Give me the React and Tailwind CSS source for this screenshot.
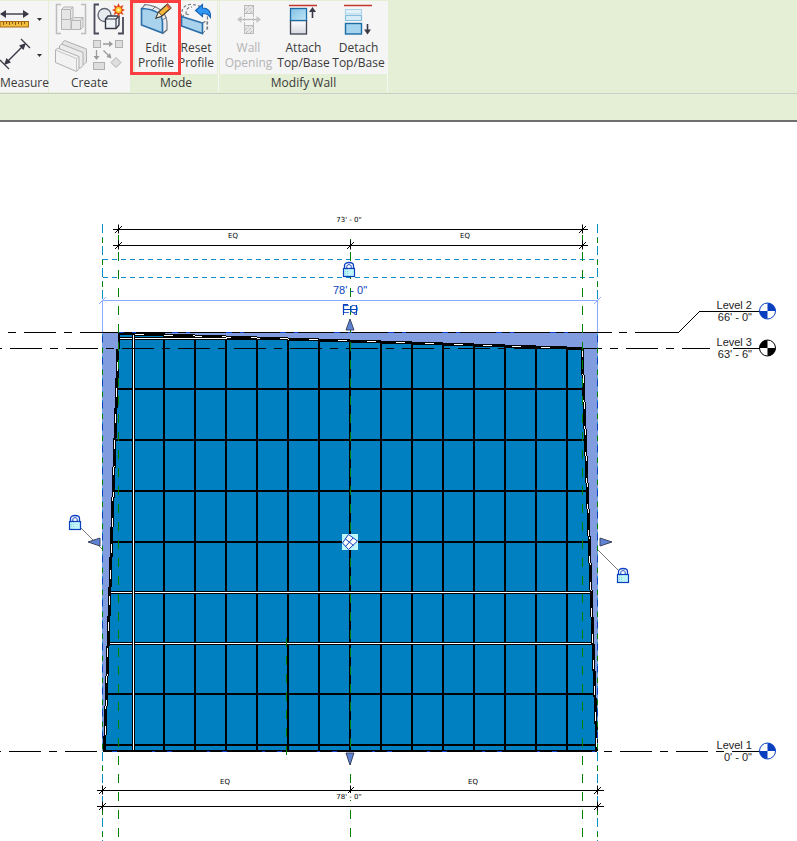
import React from "react";

const INK = "#3a3a46";

function Tool({ label, icon, className = "", disabled = false, children }) {
  return (
    <button
      type="button"
      disabled={disabled}
      className={
        "relative flex h-[73px] shrink-0 flex-col items-center whitespace-nowrap text-center leading-[15px] " +
        (disabled ? "text-[#b4b4b4] " : "text-[#3a3a3a] ") +
        className
      }
    >
      {icon}
      {label.map((line) => (
        <span key={line}>{line}</span>
      ))}
      {children}
    </button>
  );
}

function Panel({ title, className = "", titleClass = "", bodyClass = "", children }) {
  return (
    <section className={"flex shrink-0 flex-col bg-[#f5f5f5] " + className}>
      <div className={"flex h-[73px] " + bodyClass}>{children}</div>
      <h2 className={"h-[18px] text-center leading-[18px] whitespace-nowrap " + titleClass}>{title}</h2>
    </section>
  );
}

function RulerIcon() {
  return (
    <svg viewBox="0 1 48 36" className="h-9 w-12">
      <path d="M1 14H28" stroke={INK} strokeWidth="1.4" />
      <path d="M0 14L6 10V18ZM29 14L23 10V18Z" fill={INK} />
      <rect x="0" y="21.500" width="28.500" height="5.500" fill="#f0bd3c" stroke="#a46b16" />
      <path d="M3.500 22v3M6.500 22v2M9.500 22v3M12.500 22v2M15.500 22v3M18.500 22v2M21.500 22v3M24.500 22v2" stroke="#8a5a14" />
      <path d="M37 18h5l-2.500 3z" fill="#333" />
    </svg>
  );
}

function AlignedIcon() {
  return (
    <svg viewBox="0 37 48 36" className="h-9 w-12">
      <path d="M6 63L24 45" stroke={INK} strokeWidth="1.4" />
      <path d="M4 65L6.500 58L11 62.500ZM26 43L19 45.500L23.500 50Z" fill={INK} />
      <path d="M0 60L9 69M21 39L30 48" stroke={INK} strokeWidth="1.3" />
      <path d="M37 54h5l-2.500 3z" fill="#333" />
    </svg>
  );
}

function AssemblyIcon() {
  return (
    <svg viewBox="52 1 38 36" className="h-9 w-[38px]" fill="none" stroke="#b5b5b5">
      <path d="M61 4.500H56.500V33.500H61M81 4.500H85.500V33.500H81" strokeWidth="1.500" stroke="#bdbdbd" />
      <g fill="#e6e6e6">
        <path d="M61.500 9.500L64 7H73V17L70.500 19.500H61.500Z" />
        <path d="M61.500 19.500H71V29.500H61.500Z" />
        <path d="M71.500 20.500L74 17.500H83V27L80.500 29.500H71.500Z" />
      </g>
      <path d="M61.500 9.500H70.500V19.500M70.500 9.500L73 7M71.500 20.500H80.500V29.500M80.500 20.500L83 17.500" />
    </svg>
  );
}

function CreateSimilarIcon() {
  return (
    <svg viewBox="90 1 38 36" className="h-9 w-[38px]" fill="none">
      <path d="M99 4.500H94.500V33.500H99M118 33.500H123V17" stroke="#4a4a58" strokeWidth="1.800" />
      <circle cx="104.500" cy="15" r="6.500" fill="#e7ebf0" stroke="#626573" strokeWidth="1.300" />
      <path d="M105.500 19L108 16H119V25L116 28.500H105.500Z" fill="#eef1f6" stroke="#343844" strokeWidth="1.400" />
      <path d="M105.500 19H116V28.500M116 19L119 16" stroke="#343844" strokeWidth="1.200" />
      <path d="M118.500 3L120 6.500L123.500 5L122 8.500L125 10L122 11.500L123.500 15L120 13.500L118.500 17L117 13.500L113.500 15L115 11.500L112 10L115 8.500L113.500 5L117 6.500Z" fill="#e2471c" />
      <circle cx="118.500" cy="10" r="3" fill="#ffc928" />
      <circle cx="118.500" cy="10" r="1.300" fill="#fff7b8" />
    </svg>
  );
}

function PartsIcon() {
  return (
    <svg viewBox="52 37 38 36" className="h-9 w-[38px]" fill="#e4e4e4" stroke="#b0b0b0">
      <path d="M62.500 41.500L64.500 39.500L86.500 48V61L84 63.500L62.500 55Z" />
      <path d="M59.500 45L61.500 43L83 51.500V64.500L80.500 67L59.500 58.500Z" fill="#ececec" />
      <path d="M55.500 49L57.500 47L79 55.500V68L76.500 70.500L55.500 61.500Z" fill="#f2f2f2" />
      <path d="M55.500 49L76.500 57.500V70.500M76.500 57.500L79 55.500" fill="none" stroke="#c4c4c4" />
    </svg>
  );
}

function GroupIcon() {
  return (
    <svg viewBox="90 37 38 36" className="h-9 w-[38px]" fill="#dedede" stroke="#b0b0b0">
      <rect x="93.500" y="39.500" width="7" height="7" />
      <rect x="115.500" y="39.500" width="7" height="7" />
      <rect x="93.500" y="61.500" width="11" height="7" />
      <path d="M116 56.500L121 61.500L116 66.500L111 61.500Z" />
      <path d="M103 43H110M96.500 49V56M103.500 49.500L109 55" strokeWidth="1.300" stroke="#9a9a9a" />
      <path d="M109 40L113 43L109 46ZM93.500 55H99.500L96.500 59ZM111.500 57.500L106.500 56L110 52Z" fill="#9a9a9a" stroke="none" />
    </svg>
  );
}

function EditProfileIcon() {
  return (
    <svg viewBox="138 1 36 39" className="h-[39px] w-9" fill="none">
      <path d="M141.500 9L145 4.500C157 6 166 11 167 22V30L163 33.500" fill="#e9edf2" stroke="#73777f" strokeWidth="1.200" />
      <path d="M141.500 8.500C154 9 162 13 162.500 22V33L141.500 25Z" fill="#a9d2ec" stroke="#2a6da8" strokeWidth="1.600" />
      <path d="M162.500 33L166.500 30M162 20L167 17.500M152 10L155.500 6.500" stroke="#73777f" />
      <path d="M156 18L158.500 12L167.500 4L171 8L162 16Z" fill="#f5b73a" stroke="#3c3425" strokeWidth="1.100" />
      <path d="M156 18L158.500 12L162 16Z" fill="#fff0cf" stroke="#333" strokeWidth=".8" />
      <path d="M166 5.500L167.500 4L171 8L169.500 9.500Z" fill="#e45a42" />
    </svg>
  );
}

function ResetProfileIcon() {
  return (
    <svg viewBox="178 1 36 39" className="h-[39px] w-9" fill="none">
      <path d="M181.500 17C181 8 185 5 190 4.500C199 4 207 9 207.500 18V30M181.500 17L186 14C186 9 188 7 192 7M186 14L190 15M203 23L207 20" stroke="#777a82" strokeWidth="1.200" strokeDasharray="3 2" />
      <path d="M181.500 16.500L202.500 23V33.500L181.500 26Z" fill="#a9d2ec" stroke="#2a6da8" strokeWidth="1.600" />
      <path d="M203 33L207 29V20" stroke="#777a82" strokeDasharray="3 2" />
      <path d="M195.500 10.500L202.500 4.500V8C208 8 211 11 210.500 17.500C208 14 206.500 13.500 202.500 13.500V16.500Z" fill="#2f96f3" stroke="#1763b5" strokeWidth="1.100" />
    </svg>
  );
}

function WallOpeningIcon() {
  return (
    <svg viewBox="230 1 36 39" className="h-[39px] w-9" fill="none" stroke="#bcbcbc">
      <rect x="243.500" y="5.500" width="9" height="8" fill="#e6e6e6" />
      <rect x="243.500" y="25.500" width="9" height="8" fill="#e6e6e6" />
      <path d="M244 10L248 6M245 13L252 6M249 13L252 10M244 30L248 26M245 33L252 26M249 33L252 30M243.500 14V25M252.500 14V25" strokeDasharray="3 1" />
      <path d="M239 19.500H257" strokeWidth="1.400" />
      <path d="M236 19.500L240.500 16V23ZM260 19.500L255.500 16V23Z" fill="#c4c4c4" stroke="none" />
    </svg>
  );
}

function AttachIcon() {
  return (
    <svg viewBox="285 1 36 39" className="h-[39px] w-9" fill="none">
      <defs>
        <linearGradient id="attachGlass" x1="0" x2="1" y1="0" y2="1">
          <stop offset="0" stopColor="#7fc0e4" />
          <stop offset="1" stopColor="#c3e6f7" />
        </linearGradient>
        <linearGradient id="attachWall" x1="0" x2="0" y1="0" y2="1">
          <stop offset="0" stopColor="#ffffff" />
          <stop offset="1" stopColor="#d5d7e0" />
        </linearGradient>
      </defs>
      <path d="M288 5.500H316" stroke="#c2352b" strokeWidth="1.500" />
      <rect x="289.500" y="20.500" width="16" height="13.500" fill="url(#attachWall)" stroke="#40434f" strokeWidth="1.300" />
      <rect x="289.500" y="8.500" width="16" height="12" fill="url(#attachGlass)" stroke="#1c6ca6" strokeWidth="1.300" />
      <path d="M311.500 10V18" stroke={INK} strokeWidth="1.600" />
      <path d="M311.500 7L315 12H308Z" fill={INK} />
    </svg>
  );
}

function DetachIcon() {
  return (
    <svg viewBox="341 1 36 39" className="h-[39px] w-9" fill="none">
      <path d="M344 5.500H372" stroke="#c2352b" strokeWidth="1.500" />
      <path d="M345.500 14V9.500H361.500V14Z" fill="#e2f2fa" stroke="#a9d3ea" strokeWidth="1.200" />
      <path d="M345.500 20.500V15.500H361.500V20.500Z" fill="#d6edf8" stroke="#86bfe0" strokeWidth="1.200" />
      <rect x="345.500" y="23.500" width="16" height="10.500" fill="#a5d5ee" stroke="#1c6ca6" strokeWidth="1.400" />
      <path d="M367.500 24V31" stroke={INK} strokeWidth="1.600" />
      <path d="M367.500 34.500L371 29.500H364Z" fill={INK} />
    </svg>
  );
}

function Ribbon() {
  return (
    <header className="overflow-hidden border-b-2 border-[#6e6e6e] bg-[#e4efd6] text-xs text-[#3a3a3a]">
      <div className="flex border-b border-[#cccfc8] pt-px pb-px">
        <Panel title="Measure" className="w-12" titleClass="pr-1">
          <div className="flex flex-col">
            <button type="button" aria-label="Measure between two references" className="h-9">
              <RulerIcon />
            </button>
            <button type="button" aria-label="Aligned dimension" className="h-9">
              <AlignedIcon />
            </button>
          </div>
        </Panel>
        <Panel title="Create" className="ml-px w-[81px]">
          <div className="grid grid-cols-2 pl-[3px]">
            <button type="button" aria-label="Create assembly" disabled className="h-9">
              <AssemblyIcon />
            </button>
            <button type="button" aria-label="Create similar" className="h-9">
              <CreateSimilarIcon />
            </button>
            <button type="button" aria-label="Create parts" disabled className="h-9">
              <PartsIcon />
            </button>
            <button type="button" aria-label="Create group" disabled className="h-9">
              <GroupIcon />
            </button>
          </div>
        </Panel>
        <Panel title="Mode" className="ml-[5px] w-[82px]" titleClass="bg-[#e4efd6]">
          <Tool label={["Edit", "Profile"]} icon={<EditProfileIcon />} className="z-10 w-[42px]">
            <span className="pointer-events-none absolute -top-px -left-[5px] h-[75px] w-[51px] border-3 border-[#fb3f40]" />
          </Tool>
          <Tool label={["Reset", "Profile"]} icon={<ResetProfileIcon />} className="w-[38px]" />
        </Panel>
        <div className="ml-px w-px bg-[#f5f5f5]" />
        <Panel title="Modify Wall" className="ml-px w-[168px] border-r border-[#f5f5f5]" titleClass="bg-[#e4efd6]" bodyClass="pl-px">
          <Tool label={["Wall", "Opening"]} icon={<WallOpeningIcon />} disabled className="w-[55px]" />
          <Tool label={["Attach", "Top/Base"]} icon={<AttachIcon />} className="w-[55px]" />
          <Tool label={["Detach", "Top/Base"]} icon={<DetachIcon />} className="w-[55px]" />
        </Panel>
      </div>
      <div className="h-[26px]" />
    </header>
  );
}

const COLUMNS = [164, 195, 226, 257, 288, 319, 350, 381, 412, 443, 474, 505, 536, 567];
const ROWS = [389, 440, 491, 542, 694, 745];

function Line({ x1, y1, x2, y2, color = "#000", width = 1, dash, offset }) {
  return <line x1={x1} y1={y1} x2={x2} y2={y2} stroke={color} strokeWidth={width} strokeDasharray={dash} strokeDashoffset={offset} />;
}

function Tick({ x, y, color = "#000", tall = true }) {
  return <path d={`M${x - 3.5} ${y + 3.5}L${x + 3.5} ${y - 3.5}${tall ? `M${x} ${y - 5}V${y + 4}` : ""}`} stroke={color} fill="none" />;
}

function Padlock({ x, y }) {
  return (
    <g transform={`translate(${x} ${y})`} stroke="#0a3fbf">
      <path d="M1.500 6.500V3.500C1.500 1.500 3.500 .500 6 .500S10.500 1.500 10.500 3.500V6.500" fill="#fff" strokeWidth="1.300" />
      <path d="M3.800 6.500V4.500C3.800 3.200 4.600 2.700 6 2.700S8.200 3.200 8.200 4.500V6.500" fill="#fff" />
      <rect x=".500" y="6.500" width="11" height="8" fill="#bff6fb" strokeWidth="1.200" />
      <path d="M2.500 7V14M4.500 7V14" stroke="#8acfdc" strokeDasharray="1 1" />
    </g>
  );
}

function LevelHead({ y, color, name, elevation, flip }) {
  return (
    <g>
      <g fontSize="11" textAnchor="end" fill="#1c1c24">
        <text x="752" y={y - 2}>{name}</text>
        <text x="752" y={y + 10}>{elevation}</text>
      </g>
      <g transform={`translate(767.5 ${y})`}>
        <circle r="8" fill="#fff" stroke={color} />
        <path d={flip ? "M0 0V-8A8 8 0 0 1 8 0ZM0 0V8A8 8 0 0 1 -8 0Z" : "M0 0V-8A8 8 0 0 0 -8 0ZM0 0V8A8 8 0 0 0 8 0Z"} fill={color} />
      </g>
    </g>
  );
}

function Grip({ points }) {
  return <polygon points={points} fill="#5f84d6" stroke="#3c4560" />;
}

function Elevation() {
  const green = "#008000";
  const cyan = "#0a8fc4";
  return (
    <svg viewBox="0 122 797 719" className="block w-full" role="img" aria-label="Curtain wall elevation" fontFamily="'Liberation Sans', Arial, sans-serif">
      <defs>
        <clipPath id="wallShape">
          <polygon points="118,333 582,348 597,751 104,751 118,349" />
        </clipPath>
      </defs>

      <g shapeRendering="crispEdges">
        <rect x="102" y="332" width="496" height="419" fill="#819cdf" />
        <polygon points="118,333 582,348 597,751 104,751 118,349" fill="#0080c0" />
        <g clipPath="url(#wallShape)">
          {COLUMNS.map((x) => (
            <Line key={x} x1={x} y1={333} x2={x} y2={751} width={2} />
          ))}
          {ROWS.map((y) => (
            <Line key={y} x1={102} y1={y} x2={598} y2={y} width={2} />
          ))}
          {[592.5, 643.5].map((y) => (
            <g key={y}>
              <Line x1={102} y1={y} x2={598} y2={y} width={3} />
              <Line x1={102} y1={y} x2={598} y2={y} color="#fff" />
            </g>
          ))}
          <Line x1={118} y1={338.5} x2={320} y2={338.5} width={3} />
          <Line x1={118} y1={338.5} x2={320} y2={338.5} color="#fff" />
          <Line x1={133.5} y1={333} x2={133.5} y2={751} width={3} />
          <Line x1={133.5} y1={333} x2={133.5} y2={751} color="#fff" />
        </g>
        <path d="M119 349V333" stroke="#000" strokeWidth="2" />
        <path d="M118 333.500L582 348.500" stroke="#000" strokeWidth="3" />
        <path d="M118 349L104.500 751M582 348L597 751" fill="none" stroke="#000" strokeWidth="3" />
        <path d="M118 349L104.500 751" fill="none" stroke="#fff" strokeDasharray="9 17" strokeDashoffset="-13" />
        <path d="M582 348L597 751" fill="none" stroke="#fff" strokeDasharray="9 17" />
        <path d="M118 333.500L582 348.500" fill="none" stroke="#fff" strokeDasharray="9 20" strokeDashoffset="-17" />
        <Line x1={103} y1={751} x2={597} y2={751} width={2} />

        <Line x1={8} y1={332.5} x2={102} y2={332.5} dash="8 8 32 8" />
        <Line x1={102} y1={332.5} x2={612} y2={332.5} />
        <Line x1={118} y1={332.5} x2={598} y2={332.5} color="#0a3fd0" dash="6 8 4 36" />
        <path d="M619 332.500H627M635 332.500H679M699 311.500H760" stroke="#000" />
        <Line x1={0} y1={348.5} x2={710} y2={348.5} dash="32 8 8 8" offset={46} />
        <Line x1={733} y1={348.5} x2={760} y2={348.5} />
        <Line x1={0} y1={751.5} x2={102} y2={751.5} dash="32 8 8 8" offset={47} />
        <path d="M604 751.500H612M620 751.500H652M660 751.500H668M676 751.500H708M716 751.500H724M732 751.500H760" stroke="#000" />
        <Line x1={112} y1={751.5} x2={596} y2={751.5} color="#0a3fd0" dash="5 35 3 12" />

        <Line x1={103} y1={259.5} x2={598} y2={259.5} color={cyan} dash="5 4" />
        <Line x1={103} y1={277.5} x2={598} y2={277.5} color={cyan} dash="5 4" />
        {[102.5, 597.5].map((x) => (
          <g key={x}>
            <Line x1={x} y1={224} x2={x} y2={841} color={cyan} dash="9 4 5 4" />
            <Line x1={x} y1={238} x2={x} y2={841} color={green} dash="5 17" />
            <Line x1={x} y1={301} x2={x} y2={332} color="#8caaff" />
            <Line x1={x} y1={336} x2={x} y2={750} color="#0a3fbf" dash="6 16" />
          </g>
        ))}
        <Line x1={118.5} y1={235} x2={118.5} y2={838} color={green} dash="9 9" offset={1} />
        <Line x1={350.5} y1={239} x2={350.5} y2={838} color={green} dash="9 9" offset={5} />
        <Line x1={582.5} y1={235} x2={582.5} y2={838} color={green} dash="9 9" offset={1} />
        <Line x1={286.5} y1={638} x2={286.5} y2={758} color={green} dash="9 9" />

        <Line x1={113} y1={229.5} x2={588} y2={229.5} />
        <Line x1={113} y1={245.5} x2={588} y2={245.5} />
        <Line x1={97} y1={790.5} x2={604} y2={790.5} />
        <Line x1={97} y1={806.5} x2={604} y2={806.5} />
        <Line x1={102} y1={300.5} x2={598} y2={300.5} color="#8caaff" />
      </g>

      <Tick x={118.5} y={229.5} />
      <Tick x={582.5} y={229.5} />
      <Tick x={118.5} y={245.5} />
      <Tick x={350.5} y={245.5} />
      <Tick x={582.5} y={245.5} />
      <Tick x={102.5} y={790.5} />
      <Tick x={350.5} y={790.5} />
      <Tick x={597.5} y={790.5} />
      <Tick x={102.5} y={806.5} />
      <Tick x={597.5} y={806.5} />
      <Tick x={102.5} y={300.5} color="#8caaff" tall={false} />
      <Tick x={597.5} y={300.5} color="#8caaff" tall={false} />
      <path d="M679 332L699 312" stroke="#000" />

      <rect x="336" y="793" width="26" height="7" fill="#fff" />
      <g fontSize="7" fontFamily="'DejaVu Sans', sans-serif" textAnchor="middle" fill="#000">
        <text x="349" y="222">73' - 0"</text>
        <text x="233" y="238">EQ</text>
        <text x="465" y="238">EQ</text>
        <text x="225" y="784">EQ</text>
        <text x="473" y="784">EQ</text>
        <text x="349" y="799">78' - 0"</text>
      </g>

      <g fill="#0a3fbf" textAnchor="middle" fontSize="11">
        <text x="350" y="294">78' - 0"</text>
        <text x="350" y="313">EQ</text>
      </g>
      <path d="M343.500 304V315M343 304.500H348M356.500 305V315M343 309.500H357" stroke="#0a3fbf" fill="none" shapeRendering="crispEdges" />

      <Padlock x={343} y={262} />
      <Padlock x={69} y={515} />
      <Padlock x={617} y={568} />
      <path d="M81 528L102 549M598 550L618 570" stroke="#777" />
      <Grip points="350,319 346,330 354,330" />
      <Grip points="346,753 354,753 350,765" />
      <Grip points="100,538 100,546 88,542" />
      <Grip points="600,538 600,546 612,542" />

      <rect x="342" y="534" width="16" height="16" fill="#c2f7fb" />
      <path d="M342.500 543L348.500 534.500L357.500 541L348.500 549.500Z" fill="#fff" stroke="#0a3fbf" />
      <path d="M345.500 539L353.500 545.500M345.500 546.500L353 538" stroke="#0a3fbf" fill="none" />

      <LevelHead y={311} color="#0a3fbf" name="Level 2" elevation={"66' - 0\""} flip />
      <LevelHead y={348} color="#000" name="Level 3" elevation={"63' - 6\""} />
      <LevelHead y={751} color="#0a3fbf" name="Level 1" elevation={"0' - 0\""} flip />
    </svg>
  );
}

export default function App() {
  return (
    <div className="min-w-[400px] bg-white font-['Open_Sans','Noto_Sans',sans-serif]">
      <Ribbon />
      <main>
        <Elevation />
      </main>
    </div>
  );
}
